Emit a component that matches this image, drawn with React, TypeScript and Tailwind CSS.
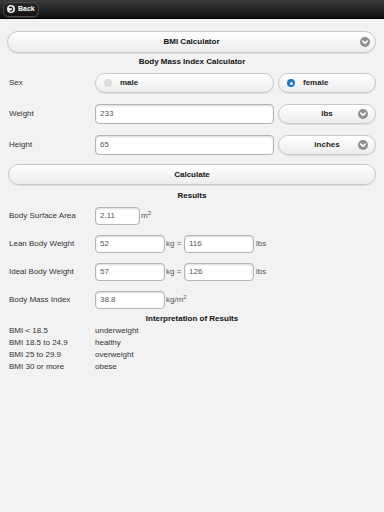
import React from "react";

const font = { fontFamily: '"Liberation Sans", Arial, Helvetica, sans-serif' };

function Chevron() {
  return (
    <svg width="10" height="10" viewBox="0 0 10 10" className="shrink-0">
      <circle cx="5" cy="5" r="5" fill="#909090" />
      <path d="M2.8 4.1 L5 6.3 L7.2 4.1" stroke="#fff" strokeWidth="1.6" fill="none" strokeLinecap="round" strokeLinejoin="round" />
    </svg>
  );
}

function Pill({ children, className = "" }: { children: React.ReactNode; className?: string }) {
  return (
    <div
      className={
        "flex items-center rounded-full border border-[#c8c8c8] bg-gradient-to-b from-[#ffffff] to-[#ececec] shadow-[0_1px_1px_rgba(0,0,0,0.08)] " +
        className
      }
    >
      {children}
    </div>
  );
}

function Input({ value, className = "" }: { value: string; className?: string }) {
  return (
    <div
      className={
        "flex items-center rounded-[4px] border border-[#b3b3b3] bg-white pl-[4px] text-[8px] text-[#555] shadow-[inset_0_1px_2px_rgba(0,0,0,0.15)] " +
        className
      }
    >
      {value}
    </div>
  );
}

export default function App() {
  return (
    <div style={font} className="min-h-[512px] w-[384px] bg-[#f2f2f2] text-[8px] text-[#333]">
      {/* Header */}
      <div className="flex h-[19px] items-center border-b border-[#000] bg-gradient-to-b from-[#3d3d3d] to-[#101010] pl-[3px]">
        <div className="flex h-[15px] w-[36px] items-center gap-[3px] rounded-[6px] border border-[#4a4a4a] bg-gradient-to-b from-[#2a2a2a] to-[#111] pl-[3px] shadow-[0_1px_0_rgba(255,255,255,0.15)]">
          <svg width="8" height="8" viewBox="0 0 8 8">
            <circle cx="4" cy="4" r="4" fill="#f0f0f0" />
            <path d="M3 2.4 A1.9 1.9 0 1 1 2.6 5.6" stroke="#111" strokeWidth="1.1" fill="none" />
            <path d="M1.6 2.4 L3.6 1.3 L3.6 3.5 Z" fill="#111" />
          </svg>
          <span className="text-[7px] font-bold text-white">Back</span>
        </div>
      </div>

      {/* BMI Calculator select */}
      <div className="mx-[7px] mt-[12px] mr-[8px]">
        <Pill className="h-[22px] justify-center relative">
          <span className="font-bold text-[#111]">BMI Calculator</span>
          <div className="absolute right-[5px] top-[5px]">
            <Chevron />
          </div>
        </Pill>
      </div>

      <div className="mt-[3px] text-center font-bold text-[#111]">Body Mass Index Calculator</div>

      {/* Form rows */}
      <div className="mt-[5px] flex flex-col gap-[11px] pr-[8px]">
        <div className="flex h-[20px] items-center">
          <div className="w-[95px] pl-[9px]">Sex</div>
          <Pill className="h-[20px] w-[179px] gap-[8px] pl-[8px]">
            <span className="h-[8px] w-[8px] rounded-full bg-[#dcdcdc]" />
            <span className="font-bold text-[#222]">male</span>
          </Pill>
          <Pill className="ml-[4px] h-[20px] flex-1 gap-[8px] pl-[8px]">
            <span className="flex h-[8px] w-[8px] items-center justify-center rounded-full bg-[#2177c1]">
              <span className="h-[3px] w-[3px] rounded-full bg-white" />
            </span>
            <span className="font-bold text-[#222]">female</span>
          </Pill>
        </div>
        <div className="flex h-[20px] items-center">
          <div className="w-[95px] pl-[9px]">Weight</div>
          <Input value="233" className="h-[20px] w-[179px]" />
          <Pill className="relative ml-[4px] h-[20px] flex-1 justify-center">
            <span className="font-bold text-[#222]">lbs</span>
            <div className="absolute right-[7px] top-[4px]">
              <Chevron />
            </div>
          </Pill>
        </div>
        <div className="flex h-[20px] items-center">
          <div className="w-[95px] pl-[9px]">Height</div>
          <Input value="65" className="h-[20px] w-[179px]" />
          <Pill className="relative ml-[4px] h-[20px] flex-1 justify-center">
            <span className="font-bold text-[#222]">inches</span>
            <div className="absolute right-[7px] top-[4px]">
              <Chevron />
            </div>
          </Pill>
        </div>
      </div>

      {/* Calculate */}
      <div className="ml-[8px] mr-[8px] mt-[9px]">
        <Pill className="h-[21px] justify-center">
          <span className="font-bold text-[#111]">Calculate</span>
        </Pill>
      </div>

      <div className="mt-[5px] text-center font-bold text-[#111]">Results</div>

      {/* Results rows */}
      <div className="mt-[5px] flex flex-col gap-[10px]">
        <div className="flex h-[18px] items-center">
          <div className="w-[95px] pl-[9px]">Body Surface Area</div>
          <Input value="2.11" className="h-[18px] w-[45px]" />
          <span className="ml-[1px] text-[#555]">
            m<sup className="text-[6px]">2</sup>
          </span>
        </div>
        <div className="flex h-[18px] items-center">
          <div className="w-[95px] pl-[9px]">Lean Body Weight</div>
          <Input value="52" className="h-[18px] w-[70px]" />
          <span className="w-[19px] pl-[1px] text-[#555]">kg =</span>
          <Input value="116" className="h-[18px] w-[70px]" />
          <span className="ml-[2px] text-[#555]">lbs</span>
        </div>
        <div className="flex h-[18px] items-center">
          <div className="w-[95px] pl-[9px]">Ideal Body Weight</div>
          <Input value="57" className="h-[18px] w-[70px]" />
          <span className="w-[19px] pl-[1px] text-[#555]">kg =</span>
          <Input value="126" className="h-[18px] w-[70px]" />
          <span className="ml-[2px] text-[#555]">lbs</span>
        </div>
        <div className="flex h-[18px] items-center">
          <div className="w-[95px] pl-[9px]">Body Mass Index</div>
          <Input value="38.8" className="h-[18px] w-[70px]" />
          <span className="ml-[1px] text-[#555]">
            kg/m<sup className="text-[6px]">2</sup>
          </span>
        </div>
      </div>

      <div className="mt-[4px] text-center font-bold text-[#111]">Interpretation of Results</div>

      <div className="flex flex-col">
        {[
          ["BMI < 18.5", "underweight"],
          ["BMI 18.5 to 24.9", "healthy"],
          ["BMI 25 to 29.9", "overweight"],
          ["BMI 30 or more", "obese"],
        ].map(([a, b]) => (
          <div key={a} className="flex h-[12px] items-center">
            <div className="w-[95px] pl-[9px]">{a}</div>
            <div>{b}</div>
          </div>
        ))}
      </div>
    </div>
  );
}
